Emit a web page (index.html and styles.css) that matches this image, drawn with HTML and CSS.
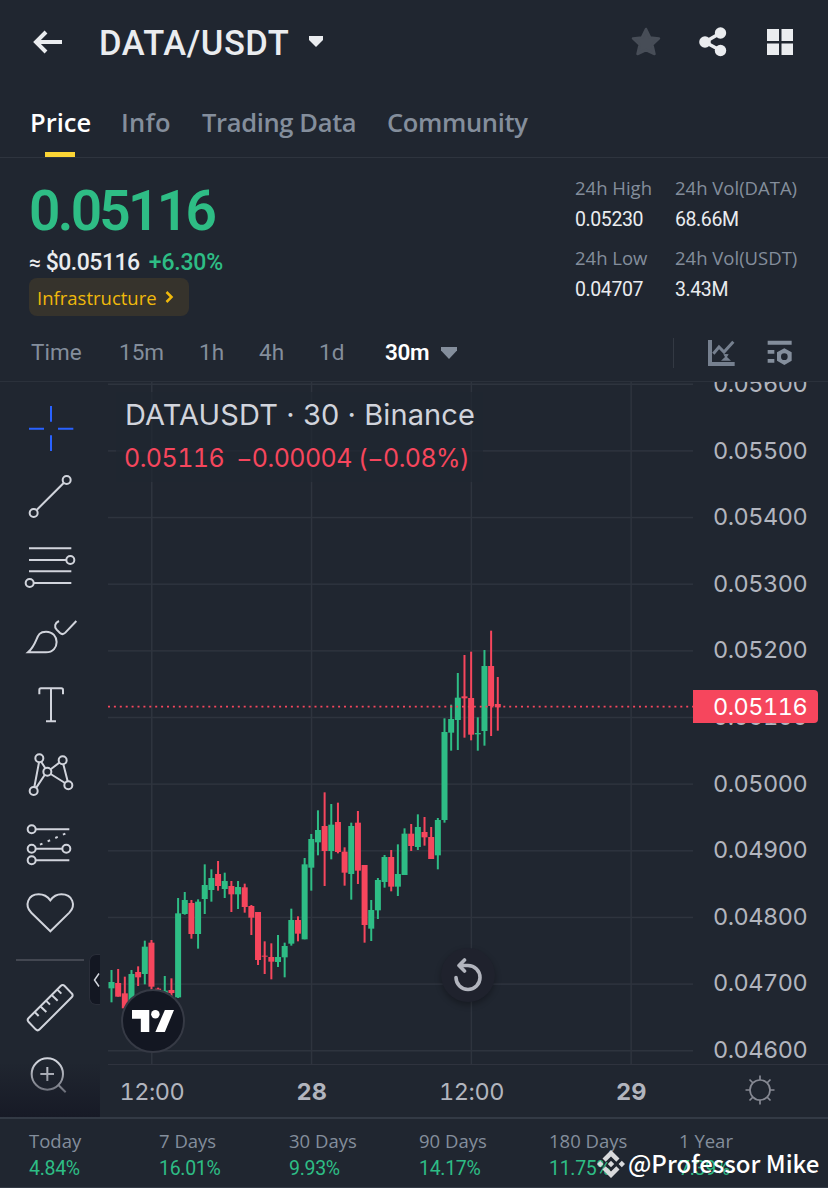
FILE: index.html
```html
<!DOCTYPE html>
<html lang="en">
<head>
    <meta charset="UTF-8">
    <title>DATA/USDT</title>
    <link rel="stylesheet" href="styles.css">
</head>
<body>
    <header class="header">
        <svg class="back" width="30" height="24" viewBox="0 0 30 24"><path d="M13 2 3 12l10 10M3 12h26" fill="none" stroke="#eaecef" stroke-width="4"/></svg>
        <h1 class="pair">DATA/USDT</h1>
        <svg class="caret" width="16" height="12" viewBox="0 0 16 12"><path d="M1 0h14v4L8 11 1 4z" fill="#eaecef"/></svg>
        <div class="actions">
            <svg width="30" height="30" viewBox="0 0 30 30"><path d="m15 2 4 8.400 9 1-6.600 6.300L23.500 27 15 23l-8.500 4 2.100-9.300L2 11.400l9-1z" fill="#474d57" stroke="#474d57" stroke-width="2.500" stroke-linejoin="round"/></svg>
            <svg width="30" height="30" viewBox="0 0 30 30"><path d="M22.500 6 7 15l15.500 8.500" fill="none" stroke="#eaecef" stroke-width="3.500"/><g fill="#eaecef"><circle cx="22.500" cy="6" r="5.700"/><circle cx="7" cy="15" r="5.800"/><circle cx="22.500" cy="23.500" r="5.700"/></g></svg>
            <svg width="26" height="26" viewBox="0 0 26 26"><path d="M0 0h12v12H0zM14.500 0h11.500v12H14.500zM0 14.500h12V26H0zM14.500 14.500H26V26H14.500z" fill="#eaecef"/></svg>
        </div>
    </header>

    <nav class="tabs">
        <a class="tab tab-price active">Price</a>
        <a class="tab tab-info">Info</a>
        <a class="tab tab-trading">Trading Data</a>
        <a class="tab tab-community">Community</a>
    </nav>

    <section class="summary">
        <div class="quote">
            <div class="last-price">0.05116</div>
            <div class="fiat"><span class="approx">≈</span> $0.05116 <span class="change">+6.30%</span></div>
            <a class="tag">Infrastructure <svg width="9" height="12" viewBox="0 0 9 12"><path d="m1.500 1 5 5-5 5" fill="none" stroke="#f0b90b" stroke-width="2.500"/></svg></a>
        </div>
        <div class="stats">
            <div class="stat"><span>24h High</span><b>0.05230</b></div>
            <div class="stat"><span>24h Vol(DATA)</span><b>68.66M</b></div>
            <div class="stat"><span>24h Low</span><b>0.04707</b></div>
            <div class="stat"><span>24h Vol(USDT)</span><b>3.43M</b></div>
        </div>
    </section>

    <div class="intervals">
        <span>Time</span>
        <span>15m</span>
        <span>1h</span>
        <span>4h</span>
        <span>1d</span>
        <span class="current">30m <svg width="16" height="12" viewBox="0 0 16 12"><path d="M0 0h16v3.500L8 12 0 3.500z" fill="#848e9c"/></svg></span>
        <div class="interval-tools">
            <svg width="28" height="28" viewBox="0 0 84 84"><g fill="none" stroke="#76808f"><path d="M9 3v72h74" stroke-width="12"/><path d="m19 44 17-20 15 15L79 8" stroke-width="9"/></g><path d="m49 46 8-1 8 1-5 8 12 11H42l12-11z" fill="#76808f"/></svg>
            <svg width="26" height="26" viewBox="0 0 78 78"><g fill="#848e9c"><path d="M2 2h72v12H2zM2 30h20v11H2zM2 57h20v11H2z"/><path fill-rule="evenodd" d="m52 25 22 12v25L52 75 30 62V37zM52 40a10 10 0 1 0 0 20 10 10 0 0 0 0-20z"/></g></svg>
        </div>
    </div>

    <main class="trade-view">
        <aside class="tools">
            <svg class="tool selected" viewBox="0 0 300 208"><path d="M87 104h45M174 104h46M153 36v47M153 124v47"/></svg>
            <svg class="tool" viewBox="0 0 300 208"><circle cx="200" cy="51" r="12"/><circle cx="101" cy="150" r="12"/><path d="m110 141 81-81"/></svg>
            <svg class="tool" viewBox="0 0 300 208"><path d="M87 46h127M87 81h112M87 115h127M102 150h112"/><circle cx="211" cy="81" r="12"/><circle cx="89" cy="150" r="12"/></svg>
            <svg class="tool" viewBox="0 0 300 208"><path d="M84 151h54c43 0 42-62 0-62-34 0-20 31-54 62zM177 57c-13 6-15 17-7 26l10 10q8 7 16-1l33-35"/></svg>
            <svg class="tool" viewBox="0 0 300 208"><path d="M118 70V57q0-5 5-5h61q5 0 5 5v13M153 52v99M138 151h30"/></svg>
            <svg class="tool" viewBox="0 0 300 208"><path d="m117 64-14 74M124 63l12 19M134 102l-25 38M152 85l26-20M190 70l13 51M152 99l43 27"/><circle cx="118" cy="52" r="12"/><circle cx="188" cy="58" r="12"/><circle cx="142" cy="92" r="12"/><circle cx="101" cy="150" r="12"/><circle cx="205" cy="133" r="12"/></svg>
            <svg class="tool" viewBox="0 0 300 208"><path d="M108 58h100M108 116h79M108 151h100"/><path d="m120 104 78-34" stroke-dasharray="8 17"/><circle cx="95" cy="58" r="12"/><circle cx="95" cy="116" r="12"/><circle cx="199" cy="116" r="12"/><circle cx="95" cy="151" r="12"/></svg>
            <svg class="tool" viewBox="0 0 300 208"><path d="M151 157 94 101C72 79 84 46 116 46q22 0 35 18 13-18 33-18c34 0 45 33 24 55z"/></svg>
            <div class="tools-divider"></div>
            <svg class="tool" viewBox="0 0 300 208"><path d="M182 39q6-6 12 0l21 22q6 6 0 12l-96 96q-6 6-12 0l-21-22q-6-6 0-12zM172 50l12 12M155 66l18 17M138 83l12 12M121 100l18 17M104 117l12 12" stroke-linejoin="round"/></svg>
            <svg class="tool" viewBox="0 0 300 208"><circle cx="142" cy="96" r="47"/><path d="M121 96h41M142 75v42M176 130l21 21"/></svg>
            <div class="tools-fade"></div>
            <button class="collapse"><svg width="8" height="16" viewBox="0 0 8 16"><path d="M7 1.500 2.500 8 7 14.500" fill="none" stroke="#d1d4dc" stroke-width="1.500"/></svg></button>
        </aside>

        <div class="chart">
            <svg id="plot" width="593" height="683" viewBox="0 0 593 683"></svg>

            <div class="legend">
                <div class="legend-title">DATAUSDT · 30 · Binance</div>
                <div class="legend-values"><span>0.05116</span><span>−0.00004 (−0.08%)</span></div>
            </div>

            <div class="price-axis">
                <span>0.05600</span>
                <span>0.05500</span>
                <span>0.05400</span>
                <span>0.05300</span>
                <span>0.05200</span>
                <span>0.05100</span>
                <span>0.05000</span>
                <span>0.04900</span>
                <span>0.04800</span>
                <span>0.04700</span>
                <span>0.04600</span>
            </div>
            <div class="price-label">0.05116</div>

            <div class="time-axis">
                <span>12:00</span>
                <b>28</b>
                <span>12:00</span>
                <b>29</b>
                <svg width="30" height="30" viewBox="0 0 30 30"><g fill="none" stroke="#868993" stroke-width="1.700"><circle cx="15" cy="15" r="10"/><path d="M15 5V.5M15 25v4.500M5 15H.5M25 15h4.500M8 8 4.500 4.500M22 8l3.500-3.500M8 22l-3.500 3.500M22 22l3.500 3.500"/></g></svg>
            </div>

            <div class="tv-logo">
                <svg width="42" height="22" viewBox="0 0 124 65"><g fill="#fff"><path d="M0 0h51v65H26V26H0z"/><circle cx="69" cy="12.500" r="12.500"/><path d="M97 0h27L97 65H69z"/></g></svg>
            </div>
            <button class="reset">
                <svg width="28" height="34" viewBox="0 0 28 34"><path d="M2 19.500a12 12 0 1 0 12-12H5M10.500 2 5 7.500l5.500 5.500" fill="none" stroke="#b2b5be" stroke-width="3.600" stroke-linecap="round" stroke-linejoin="round"/></svg>
            </button>
        </div>
    </main>

    <footer class="performance">
        <div><span>Today</span><b>4.84%</b></div>
        <div><span>7 Days</span><b>16.01%</b></div>
        <div><span>30 Days</span><b>9.93%</b></div>
        <div><span>90 Days</span><b>14.17%</b></div>
        <div><span>180 Days</span><b>11.75%</b></div>
        <div><span>1 Year</span><b>7.39%</b></div>
    </footer>

    <div class="watermark">
        <svg width="28" height="28" viewBox="0 0 28 28"><path d="m14 0 8.500 8.500-3.200 3.200L14 6.400l-5.300 5.300-3.200-3.200zM3.200 10.800 6.400 14l-3.200 3.200L0 14zM14 10.800l3.200 3.200-3.200 3.200-3.200-3.200zM24.800 10.800 28 14l-3.200 3.200-3.200-3.200zM8.700 16.300l5.300 5.300 5.300-5.300 3.200 3.200L14 28l-8.500-8.500z" fill="#d9dadc"/></svg>
        <span>@Professor Mike</span>
    </div>

    <script src="chart.js"></script>
</body>
</html>
```
FILE: chart.js
```js
// [up, body top, body bottom, wick top, wick bottom], three units to a pixel
const candles = [
    [1, 1086, 1105, 1050, 1147], [0, 1089, 1130, 1047, 1130], [0, 1120, 1165, 1070, 1165],
    [1, 1062, 1150, 1050, 1150], [0, 1056, 1072, 1039, 1098], [1, 980, 1062, 962, 1093],
    [0, 968, 1100, 960, 1110], [0, 1106, 1120, 1103, 1130], [1, 1112, 1130, 1068, 1140],
    [0, 1110, 1119, 1075, 1130], [1, 880, 1132, 834, 1134], [1, 840, 882, 816, 884],
    [0, 849, 942, 840, 956], [1, 845, 942, 838, 986], [1, 795, 837, 733, 882],
    [1, 774, 810, 748, 845], [0, 762, 798, 723, 812], [1, 783, 807, 758, 834],
    [0, 798, 823, 783, 876], [1, 801, 823, 783, 867], [0, 802, 861, 791, 878],
    [0, 858, 893, 855, 945], [0, 876, 1020, 876, 1035], [0, 1007, 1010, 964, 1062],
    [0, 1011, 1025, 970, 1078], [1, 1011, 1026, 945, 1041], [1, 978, 1012, 968, 1072],
    [1, 900, 971, 866, 977], [0, 900, 941, 889, 964], [1, 733, 958, 714, 958],
    [1, 657, 743, 642, 812], [1, 630, 667, 571, 706], [0, 618, 693, 517, 798],
    [1, 614, 693, 552, 718], [0, 606, 696, 548, 700], [0, 695, 758, 682, 797],
    [1, 618, 762, 608, 839], [0, 608, 752, 573, 792], [0, 735, 915, 735, 968],
    [1, 870, 926, 840, 963], [1, 780, 871, 774, 897], [1, 711, 786, 705, 803],
    [0, 711, 800, 690, 814], [1, 762, 800, 673, 828], [1, 641, 765, 625, 765],
    [0, 641, 678, 612, 693], [1, 621, 681, 583, 690], [0, 636, 652, 591, 677],
    [0, 651, 717, 621, 717], [1, 600, 706, 594, 748], [1, 336, 600, 295, 608],
    [1, 297, 338, 254, 392], [1, 233, 300, 159, 390], [0, 229, 235, 105, 353],
    [0, 234, 344, 95, 361], [1, 339, 343, 292, 392], [1, 138, 333, 90, 377],
    [0, 138, 258, 32, 348], [0, 252, 262, 171, 332]
];

const y = v => 238 + v / 3;
let svg = '';

// grid
for (let i = 0; i < 11; i++) {
    svg += `<rect x="8" y="${(1.5 + i * 66.65).toFixed(2)}" width="585" height="1.5" fill="#2e343e"/>`;
}
for (let i = 0; i < 4; i++) {
    svg += `<rect x="${51 + i * 159.8}" y="0" width="1.5" height="683" fill="#2e343e"/>`;
}

candles.forEach(([up, top, bottom, high, low], i) => {
    const x = 11.5 + i * 6.66;
    const color = up ? '#2ebd85' : '#f6465d';
    svg += `<rect x="${x - 1}" y="${y(high)}" width="2" height="${(low - high) / 3}" fill="${color}"/>`;
    svg += `<rect x="${x - 3}" y="${y(top)}" width="6" height="${(bottom - top) / 3}" fill="${color}"/>`;
});

// last price
svg += '<path d="M8 324.700h585" stroke="#f6465d" stroke-width="1.700" stroke-dasharray="2 3.900"/>';
document.getElementById('plot').innerHTML = svg;
```
FILE: styles.css
```css
* {
    box-sizing: border-box;
}

body {
    margin: 0;
    height: 1188px;
    position: relative;
    overflow: hidden;
    background-color: #202630;
    color: #eaecef;
    font-family: Roboto, "Liberation Sans", sans-serif;
}

svg {
    display: block;
    flex-shrink: 0;
}

button {
    border: none;
    padding: 0;
}

.header {
    display: flex;
    align-items: center;
    height: 84px;
    padding: 0 35px 0 33px;
}

.pair {
    margin: 2px 0 0 36px;
    width: 188px;
    font-size: 34.5px;
    font-weight: 500;
    letter-spacing: 0.6px;
    white-space: nowrap;
}

.caret {
    margin-left: 21px;
}

.actions {
    display: flex;
    align-items: center;
    gap: 37px;
    margin-left: auto;
}

.actions svg:last-child {
    margin-left: 2px;
}

.tabs {
    display: flex;
    gap: 30px;
    height: 74px;
    padding-left: 30px;
    border-bottom: 1px solid #2e343e;
}

.tab {
    position: relative;
    color: #848e9c;
    font-family: "Open Sans", "Liberation Sans", sans-serif;
    font-size: 25.5px;
    font-weight: 600;
    line-height: 76px;
    letter-spacing: -0.35px;
    white-space: nowrap;
}

.tab-price {
    width: 61px;
    letter-spacing: 0;
}

.tab-info {
    width: 51px;
    letter-spacing: 0.3px;
}

.tab-trading {
    width: 155px;
}

.tab-community {
    width: 142px;
}

.tab.active {
    color: #fff;
}

.tab.active::after {
    content: '';
    position: absolute;
    left: 15px;
    bottom: 0;
    width: 30px;
    height: 5px;
    background-color: #fcd535;
}

.summary {
    display: flex;
    justify-content: space-between;
    height: 167px;
    padding: 23px 29px 0;
}

.last-price {
    height: 62px;
    font-size: 55px;
    font-weight: 600;
    line-height: 60px;
    letter-spacing: -2.7px;
    color: #2ebd85;
}

.fiat {
    height: 35px;
    font-size: 23px;
    font-weight: 500;
    line-height: 39px;
    letter-spacing: -0.5px;
    white-space: nowrap;
}

.approx {
    font-size: 21px;
}

.change {
    margin-left: 4px;
    letter-spacing: -0.2px;
    color: #2ebd85;
}

.tag {
    display: flex;
    align-items: center;
    gap: 8px;
    width: 160px;
    height: 38px;
    padding-left: 8px;
    border-radius: 8px;
    background-color: #36332c;
    color: #f0b90b;
    font-family: "Open Sans", "Liberation Sans", sans-serif;
    font-size: 18.5px;
}

.stats {
    display: grid;
    grid-template-columns: 100px 124px;
    grid-auto-rows: 69.5px;
    margin-top: -8px;
}

.stat span,
.stat b {
    display: block;
    white-space: nowrap;
}

.stat span {
    color: #848e9c;
    font-family: "Open Sans", "Liberation Sans", sans-serif;
    font-size: 18.5px;
    line-height: 30px;
}

.stat b {
    font-size: 19.5px;
    font-weight: 400;
    line-height: 34px;
    letter-spacing: -0.4px;
}

.intervals {
    display: grid;
    grid-template-columns: 88px 80px 60px 60px 66px 1fr auto;
    align-items: center;
    height: 57px;
    padding: 0 35px 2px 31px;
    border-bottom: 1px solid #2b313b;
    color: #848e9c;
    font-size: 22.5px;
    line-height: 55px;
}

.current {
    display: flex;
    align-items: center;
    gap: 12px;
    color: #fff;
    font-weight: 600;
    letter-spacing: -0.4px;
}

.interval-tools {
    display: flex;
    align-items: center;
    gap: 32px;
    height: 30px;
    padding-left: 33px;
    border-left: 1px solid #333943;
}

.trade-view {
    display: flex;
    height: 735px;
}

.tools {
    position: relative;
    width: 100px;
    padding-top: 12px;
}

.tool {
    width: 100px;
    height: 69.33px;
    fill: none;
    stroke: #d1d4dc;
    stroke-width: 6;
}

.tool.selected {
    stroke: #2962ff;
}

.tools-divider {
    height: 2px;
    margin: 10px 16px 12px;
    background-color: #434751;
}

.tools-fade {
    position: absolute;
    left: 0;
    bottom: 0;
    width: 100%;
    height: 55px;
    background: linear-gradient(rgba(23, 26, 38, 0), #171a26);
}

.collapse {
    position: absolute;
    right: 0;
    top: 572px;
    width: 11px;
    height: 51px;
    padding-left: 2px;
    border: 1px solid #2a2e39;
    border-right: none;
    border-radius: 7px 0 0 7px;
    background-color: #131722;
    overflow: hidden;
}

.chart {
    position: relative;
    display: grid;
    grid-template-columns: 593px 135px;
    grid-template-rows: 682px 53px;
    font-family: Inter, "Liberation Sans", sans-serif;
    font-variant-numeric: tabular-nums;
    color: #b2b5be;
}

.legend {
    position: absolute;
    left: 16px;
    top: 10px;
    padding: 2px 8px;
    background-color: rgba(32, 38, 48, 0.7);
    white-space: nowrap;
}

.legend-title {
    margin-left: 1px;
    color: #d1d4dc;
    font-size: 29px;
    font-variant-numeric: normal;
    letter-spacing: 0.1px;
    line-height: 42px;
}

.legend-values {
    display: flex;
    gap: 12px;
    color: #f6465d;
    font-size: 25px;
    letter-spacing: -0.55px;
    line-height: 44px;
}

.price-axis {
    height: 682px;
    overflow: hidden;
    padding-left: 20px;
    font-size: 23.5px;
    letter-spacing: -0.5px;
}

.price-axis span {
    display: block;
    height: 66.6px;
    line-height: 66.6px;
}

.price-axis span:first-child {
    margin-top: -31px;
}

.price-label {
    position: absolute;
    left: 593px;
    top: 308px;
    width: 125px;
    height: 33px;
    padding-left: 20px;
    border-radius: 0 4px 4px 0;
    background-color: #f6465d;
    color: #fff;
    font-size: 23.5px;
    line-height: 33px;
    letter-spacing: -0.5px;
}

.time-axis {
    grid-column: 1 / 3;
    display: flex;
    align-items: center;
    margin-left: 8px;
    border-top: 1px solid #2f333e;
    font-size: 23.5px;
}

.time-axis span,
.time-axis b {
    width: 159.8px;
    text-align: center;
}

.time-axis span {
    letter-spacing: -0.5px;
}

.time-axis :first-child {
    margin-left: -36px;
}

.time-axis b {
    font-weight: 700;
}

.time-axis svg {
    margin-left: 34px;
    position: relative;
    top: -1px;
}

.tv-logo {
    position: absolute;
    left: 21px;
    top: 607px;
    display: flex;
    align-items: center;
    justify-content: center;
    width: 64px;
    height: 64px;
    border: 2px solid #363a45;
    border-radius: 50%;
    background-color: #131722;
}

.reset {
    position: absolute;
    left: 341px;
    top: 566px;
    display: flex;
    align-items: center;
    justify-content: center;
    width: 54px;
    height: 54px;
    border-radius: 50%;
    background-color: #1f222d;
    box-shadow: 0 3px 6px rgba(0, 0, 0, 0.3);
}

.performance {
    display: grid;
    grid-template-columns: repeat(6, 130px);
    height: 71px;
    padding: 8px 0 0 29px;
    border-top: 2px solid #333a45;
    border-bottom: 1px solid #333a45;
}

.performance span,
.performance b {
    display: block;
    line-height: 28px;
}

.performance span {
    color: #848e9c;
    font-family: "Open Sans", "Liberation Sans", sans-serif;
    font-size: 18.5px;
}

.performance b {
    color: #2ebd85;
    font-size: 19.5px;
    font-weight: 400;
    letter-spacing: -0.3px;
}

.watermark {
    position: absolute;
    left: 597px;
    top: 1146px;
    display: flex;
    align-items: center;
    gap: 3px;
    height: 36px;
    color: #fff;
    font-family: "Noto Sans CJK SC", sans-serif;
    font-size: 24px;
    font-weight: 500;
    white-space: nowrap;
}

.watermark span {
    margin-top: -4px;
}
```
